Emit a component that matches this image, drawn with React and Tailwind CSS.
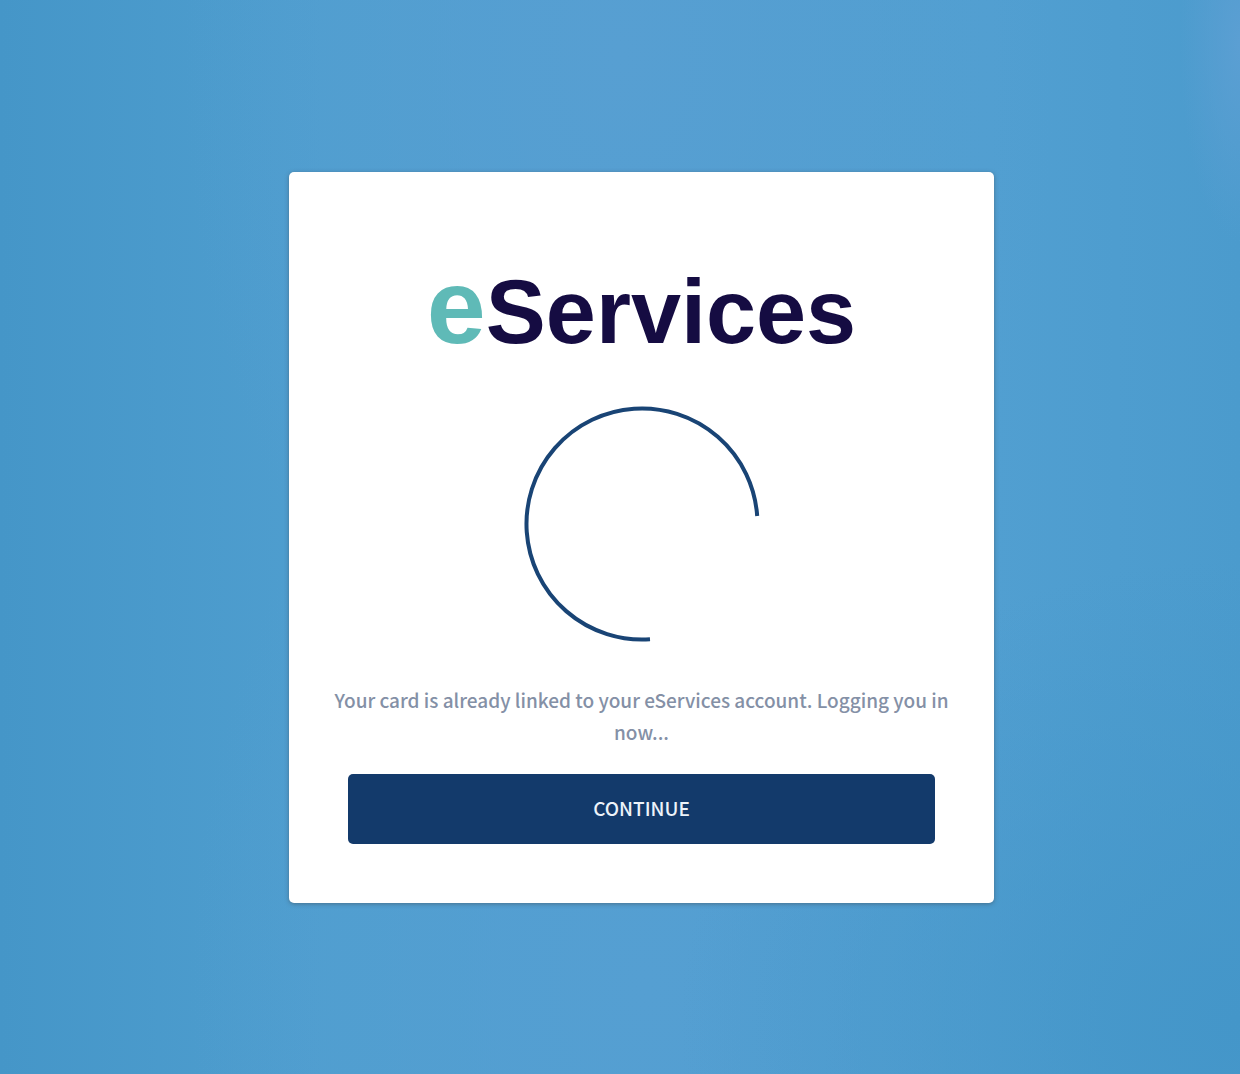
/***
 * Login card shown while a linked card signs the user in.
 */

function Logo() {
    return (
        <h1 className="font-['Liberation_Sans',Arial,sans-serif] text-[90px] leading-[100px] font-bold text-[#150c42] whitespace-nowrap">
            <span className="text-[106px] text-[#5fbab7]">e</span>Services
        </h1>
    )
}

function Spinner() {
    return (
        <svg
            className="size-[236px]"
            viewBox="0 0 236 236"
            fill="none"
            role="status"
            aria-label="Logging in"
        >
            <path
                d="M233.2 110 A115.5 115.5 0 1 0 126 233.2"
                stroke="#194475"
                strokeWidth="4"
            />
        </svg>
    )
}

export default function App() {
    return (
        <main className="min-h-screen flex items-center justify-center pl-[43px] bg-[#4f9ed0] bg-[radial-gradient(ellipse_60px_200px_at_100%_4%,#5b9fd3_0%,transparent_100%),radial-gradient(ellipse_at_100%_95%,#4496c9_0%,transparent_32%),radial-gradient(ellipse_at_50%_5%,#579fd2_0%,transparent_50%),radial-gradient(ellipse_at_52%_92%,#559fd2_0%,transparent_50%),linear-gradient(to_right,#4596c8_0%,#4f9ecf_26%,#519fd1_80%,#4b9bcd_100%)] font-['Noto_Sans_CJK_SC','Noto_Sans',sans-serif]">
            {/** CARD */}
            <div className="w-full max-w-[705px] flex flex-col items-center rounded-[5px] bg-white px-10 pt-[84px] pb-[59px] shadow-[0_1px_4px_rgba(60,70,80,0.5)]">
                <Logo />
                <div className="mt-11">
                    <Spinner />
                </div>
                {/** MESSAGE */}
                <p className="mt-[42px] text-center text-[19px] leading-8 font-medium text-[#8490a6]">
                    Your card is already linked to your eServices account. Logging you in
                    now...
                </p>
                {/** ACTION */}
                <div className="mt-[26px] w-full px-[19px]">
                    <button
                        type="button"
                        className="w-full h-[70px] rounded-[5px] bg-[#133a6b] text-[19px] font-medium text-[#edf3fa] cursor-pointer"
                    >
                        CONTINUE
                    </button>
                </div>
            </div>
        </main>
    )
}
